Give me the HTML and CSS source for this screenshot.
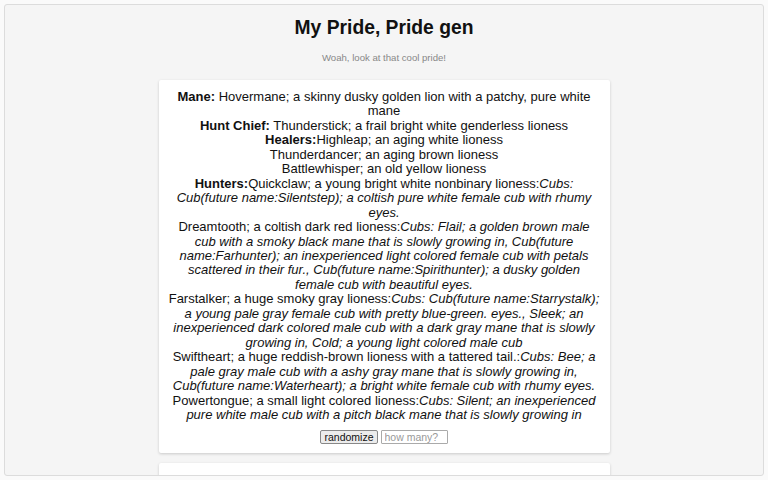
FILE: index.html
```html
<!DOCTYPE HTML>
<html>
<head>
<title>My Pride, Pride gen</title>
<link rel="stylesheet" href="styles.css">
</head>
<body>
  <div class="frame">
    <h1 class="title">My Pride, Pride gen</h1>
    <p class="sub">Woah, look at that cool pride!</p>

    <!-- generated pride -->
    <div class="card">
      <div class="pride">
        <b>Mane:</b> Hovermane; a skinny dusky golden lion with a patchy, pure white mane<br>
        <b>Hunt Chief:</b> Thunderstick; a frail bright white genderless lioness<br>
        <b>Healers:</b>Highleap; an aging white lioness<br>
        Thunderdancer; an aging brown lioness<br>
        Battlewhisper; an old yellow lioness<br>
        <b>Hunters:</b>Quickclaw; a young bright white nonbinary lioness:<i>Cubs: Cub(future name:Silentstep); a coltish pure white female cub with rhumy eyes.</i><br>
        Dreamtooth; a coltish dark red lioness:<i>Cubs: Flail; a golden brown male cub with a smoky black mane that is slowly growing in, Cub(future name:Farhunter); an inexperienced light colored female cub with petals scattered in their fur., Cub(future name:Spirithunter); a dusky golden female cub with beautiful eyes.</i><br>
        Farstalker; a huge smoky gray lioness:<i>Cubs: Cub(future name:Starrystalk); a young pale gray female cub with pretty blue-green. eyes., Sleek; an inexperienced dark colored male cub with a dark gray mane that is slowly growing in, Cold; a young light colored male cub</i><br>
        Swiftheart; a huge reddish-brown lioness with a tattered tail.:<i>Cubs: Bee; a pale gray male cub with a ashy gray mane that is slowly growing in, Cub(future name:Waterheart); a bright white female cub with rhumy eyes.</i><br>
        Powertongue; a small light colored lioness:<i>Cubs: Silent; an inexperienced pure white male cub with a pitch black mane that is slowly growing in</i>
      </div>
      <div class="controls">
        <button class="btn">randomize</button>
        <input class="count" type="text" placeholder="how many?">
      </div>
    </div>

    <div class="card"></div>
  </div>
</body>
</html>
```

FILE: styles.css
```css
/* page */
body {
    margin: 0;
    padding: 4px;
    background: #fafafa;
    font-family: "Liberation Sans", Arial, sans-serif;
    color: #111;
}
.frame {
    box-sizing: border-box;
    height: 472px;
    border: 1px solid #dcdcdc;
    border-radius: 3px;
    background: #f5f5f5;
    overflow: hidden;
}
.title {
    margin: 12px 0 0;
    font-size: 19.3px;
    text-align: center;
}
.sub {
    margin: 13px 0 17px;
    font-size: 9.6px;
    color: #888;
    text-align: center;
}

/* cards */
.card {
    box-sizing: border-box;
    width: 451px;
    min-height: 40px;
    margin: 0 auto 10px;
    padding: 10px 9px 9px;
    background: #fff;
    border-radius: 2px;
    box-shadow: 0 1px 3px rgba(0, 0, 0, 0.18);
}
.pride {
    font-size: 13px;
    line-height: 14.45px;
    text-align: center;
}
.controls {
    margin-top: 8px;
    display: flex;
    justify-content: center;
    gap: 3px;
}
.btn {
    font-family: "Liberation Sans", Arial, sans-serif;
    font-size: 10.5px;
    padding: 0 3px;
    height: 14px;
    line-height: 11px;
    border: 1px solid #888;
    border-radius: 2px;
    background: #ececec;
    color: #111;
}
.count {
    box-sizing: border-box;
    width: 67px;
    height: 14px;
    padding: 0 3px;
    font-family: "Liberation Sans", Arial, sans-serif;
    font-size: 10.5px;
    border: 1px solid #aaa;
    border-radius: 1px;
}
.count::placeholder { color: #999; }
```
